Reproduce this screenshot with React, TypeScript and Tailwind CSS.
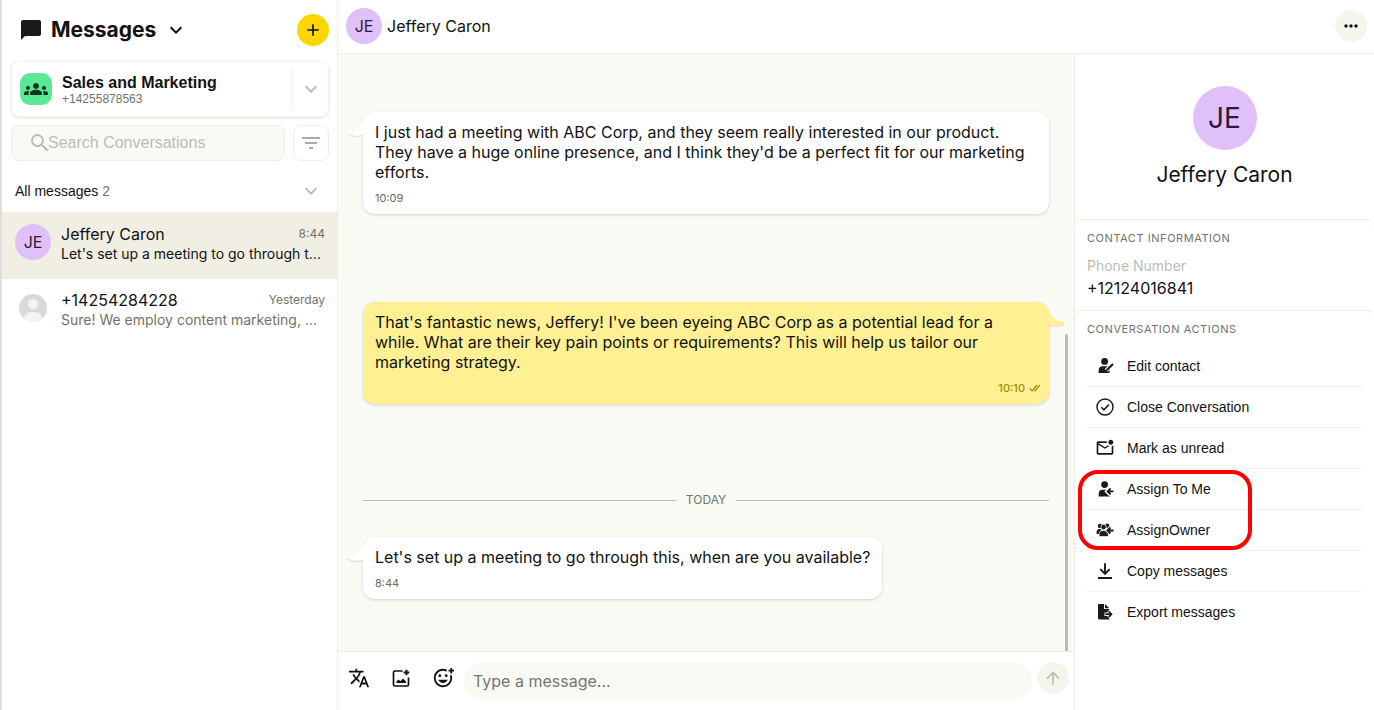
import { useState, type ReactNode } from "react";
import {
  MdAdd,
  MdArrowUpward,
  MdChatBubble,
  MdFilterList,
  MdGroups,
  MdKeyboardArrowDown,
  MdMoreHoriz,
  MdOutlineAddReaction,
  MdOutlineMarkEmailUnread,
  MdSearch,
  MdTranslate,
} from "react-icons/md";

function Avatar({ className }: { className: string }) {
  return (
    <span className={`flex shrink-0 items-center justify-center rounded-full bg-[#e0c0f8] text-[#2a1a35] ${className}`}>
      JE
    </span>
  );
}

function PersonIcon() {
  return (
    <svg viewBox="0 0 28 28" className="size-7 shrink-0">
      <defs>
        <clipPath id="person-clip">
          <circle cx="14" cy="14" r="14" />
        </clipPath>
      </defs>
      <g clipPath="url(#person-clip)">
        <rect width="28" height="28" fill="#d9d9d9" />
        <circle cx="14" cy="10" r="5.2" fill="#f3f3f3" />
        <path d="M5 28v-3.500a6.500 6.500 0 0 1 6.500-6.500h5a6.500 6.500 0 0 1 6.500 6.500V28z" fill="#f3f3f3" />
      </g>
    </svg>
  );
}

function AddImageIcon() {
  return (
    <svg viewBox="0 0 20 20" className="size-5" fill="none" stroke="currentColor" strokeWidth="1.700">
      <path d="M11.500 3H4a1.500 1.500 0 0 0-1.500 1.500v12A1.500 1.500 0 0 0 4 18h12a1.500 1.500 0 0 0 1.500-1.500V9.500" />
      <path d="M15.500 1.700v5.600M12.700 4.500h5.600" strokeWidth="2" />
      <path d="M5.500 15v-1.600l2-2 1.900 1.800 2.600-2.800 3 3V15z" fill="currentColor" stroke="none" />
    </svg>
  );
}

function EditContactIcon() {
  return (
    <svg viewBox="0 0 18 18" className="size-[18px]" fill="currentColor">
      <circle cx="8.600" cy="4.400" r="3.400" />
      <path d="M2.700 16v-2.700C2.700 10.800 4.300 9.300 6.500 9.300H11c1 0 1.800.2 2.500.7V16z" />
      <path d="M17 6.500l-6.800 6.800" fill="none" stroke="#fff" strokeWidth="4" />
      <path d="M17 6.900l-5.900 5.900" fill="none" stroke="currentColor" strokeWidth="2.100" />
      <path d="M10.200 12l1.700 1.700-2.800 1z" />
    </svg>
  );
}

function CheckCircleIcon() {
  return (
    <svg viewBox="0 0 18 18" className="size-[18px]" fill="none" stroke="currentColor" strokeWidth="1.400">
      <circle cx="9" cy="9" r="8" />
      <path d="M5.400 9.300l2.500 2.500 5-5.300" strokeWidth="1.600" />
    </svg>
  );
}

function AssignMeIcon() {
  return (
    <svg viewBox="0 0 18 18" className="size-[18px]" fill="currentColor">
      <circle cx="8.600" cy="4.600" r="3.400" />
      <path d="M2.700 16.500v-2.700c0-2.500 1.600-4 3.800-4H11c1.200 0 2.200.5 2.900 1.300v5.400z" />
      <path d="M17.500 11.400h-6M14.600 8l-3.400 3.400 3.400 3.400" fill="none" stroke="#fff" strokeWidth="4" />
      <path d="M17.400 11.400h-5.400M14.600 8.500l-2.900 2.900 2.900 2.900" fill="none" stroke="currentColor" strokeWidth="1.900" />
    </svg>
  );
}

function AssignOwnerIcon() {
  return (
    <svg viewBox="0 0 18 18" className="size-[18px]" fill="currentColor">
      <circle cx="4" cy="5" r="2.200" />
      <circle cx="11.200" cy="4.800" r="2.200" />
      <path d="M.6 13v-2.200C.6 9 1.800 7.900 3.200 7.900h1.600v5.100z" />
      <circle cx="7.600" cy="6" r="2.700" stroke="#fff" strokeWidth=".7" />
      <path d="M3.100 15.500v-2.300C3.100 11 4.500 9.600 6.300 9.600h2.900c1.700 0 3 1.200 3.200 3v2.900z" stroke="#fff" strokeWidth=".7" />
      <path d="M17.700 9.500h-5M14.200 6.500l-3 3 3 3" fill="none" stroke="#fff" strokeWidth="3.400" />
      <path d="M17.600 9.500h-5.800M14.400 6.500l-3 3 3 3" fill="none" stroke="currentColor" strokeWidth="1.900" />
    </svg>
  );
}

function DownloadIcon() {
  return (
    <svg viewBox="0 0 18 18" className="size-[18px]" fill="none" stroke="currentColor" strokeWidth="1.900">
      <path d="M9 1.200v10.300M4.300 7.200L9 11.900l4.700-4.700M2 16h14" />
    </svg>
  );
}

function ExportIcon() {
  return (
    <svg viewBox="0 0 18 18" className="size-[18px]" fill="currentColor">
      <path d="M2 2.200C2 1.500 2.500 1 3.200 1H8v5h5.300v10.500H3.200C2.500 16.500 2 16 2 15.300z" />
      <path d="M9 1l4.200 4.200H9z" />
      <path d="M8.500 11.200h7M12.400 7.800l3.400 3.400-3.400 3.400" fill="none" stroke="#fff" strokeWidth="3.600" />
      <path d="M9.300 11.200h6M12.600 8.300l2.900 2.900-2.900 2.900" fill="none" stroke="currentColor" strokeWidth="1.700" />
    </svg>
  );
}

function DoubleCheck() {
  return (
    <svg viewBox="0 0 12 8" className="h-2 w-3" fill="none" stroke="currentColor" strokeWidth="1.200">
      <path d="M.7 4.300l2.400 2.500L8 1M5.300 6.500l.5.400L11 1" />
    </svg>
  );
}

function Tail({ side }: { side: "left" | "right" }) {
  return (
    <svg
      viewBox="0 0 20 26"
      className={
        side === "left"
          ? "absolute top-0 -left-4 h-[26px] w-5 text-white"
          : "absolute top-0 -right-4 h-[26px] w-5 -scale-x-100 text-[#fff094]"
      }
      fill="currentColor"
    >
      <path d="M.5 21C3 24.500 9 25 15.700 23.500" fill="none" stroke="#000" strokeOpacity=".09" strokeWidth="1.500" />
      <path d="M20 4l-3 3C14.500 14 9 19.800.3 20.200 2 23 9 24.500 16 22.800l4-.8z" />
    </svg>
  );
}

function Message({
  children,
  time,
  own = false,
  className = "",
}: {
  children: ReactNode;
  time: string;
  own?: boolean;
  className?: string;
}) {
  return (
    <article
      className={`relative rounded-xl px-3 text-base leading-5 shadow-[0_1px_3px_rgba(0,0,0,0.16)] ${
        own ? "bg-[#fff094]" : "bg-white"
      } ${className}`}
    >
      <Tail side={own ? "right" : "left"} />
      <p className="pt-2.5">{children}</p>
      <footer
        className={`flex h-8 items-center gap-1 text-[11px] leading-4 ${
          own ? "-mr-1 justify-end font-medium text-[#a28c00]" : "text-[#6a6a62]"
        }`}
      >
        <time>{time}</time>
        {own && <DoubleCheck />}
      </footer>
    </article>
  );
}

const actions: { label: string; icon: ReactNode }[] = [
  { label: "Edit contact", icon: <EditContactIcon /> },
  { label: "Close Conversation", icon: <CheckCircleIcon /> },
  { label: "Mark as unread", icon: <MdOutlineMarkEmailUnread className="size-5" /> },
  { label: "Assign To Me", icon: <AssignMeIcon /> },
  { label: "AssignOwner", icon: <AssignOwnerIcon /> },
  { label: "Copy messages", icon: <DownloadIcon /> },
  { label: "Export messages", icon: <ExportIcon /> },
];

function Sidebar() {
  return (
    <aside className="flex w-[338px] shrink-0 flex-col border-r border-l-2 border-r-[#efeee0] border-l-[#dedede]">
      <header className="flex h-[61px] items-center pr-2 pb-0.5 pl-[17px]">
        <MdChatBubble className="size-6 shrink-0 text-[#1a1a17]" />
        <h1 className="ml-2 text-[21px] font-bold">Messages</h1>
        <button aria-label="Switch section" className="ml-2">
          <MdKeyboardArrowDown className="size-6" />
        </button>
        <button aria-label="New message" className="ml-auto flex size-8 items-center justify-center rounded-full bg-[#ffd600]">
          <MdAdd className="size-5" />
        </button>
      </header>
      <section className="mr-2 ml-[9px] flex h-14 items-center rounded-lg border border-[#f3f3ea] pl-2 font-[Liberation_Sans,Arial,sans-serif] shadow-[0_1px_3px_rgba(0,0,0,0.12)]">
        <span className="flex size-8 items-center justify-center rounded-[10px] bg-[#5ce995] text-[#12351f]">
          <MdGroups className="size-6" />
        </span>
        <div className="ml-2.5 flex-1">
          <h2 className="text-base leading-5 font-bold">Sales and Marketing</h2>
          <p className="text-xs leading-3 text-[#73736a]">+14255878563</p>
        </div>
        <button aria-label="Switch inbox" className="flex h-10 w-9 items-center justify-center border-l border-[#f1f0e4] text-[#bdbdb3]">
          <MdKeyboardArrowDown className="size-6" />
        </button>
      </section>
      <div className="mt-2 mr-2 ml-[9px] flex h-9 gap-2 font-[Liberation_Sans,Arial,sans-serif]">
        <label className="flex min-w-0 flex-1 items-center rounded-lg border border-[#efeee0] bg-[#f9faf4] pl-4">
          <MdSearch className="size-6 shrink-0 text-[#bcbcb2]" />
          <input
            type="search"
            aria-label="Search Conversations"
            placeholder="Search Conversations"
            className="-ml-1 min-w-0 flex-1 bg-transparent text-base outline-none placeholder:text-[#bdbdb3]"
          />
        </label>
        <button aria-label="Filter" className="flex w-9 items-center justify-center rounded-lg border border-[#efeee0] text-[#acaca4]">
          <MdFilterList className="size-6" />
        </button>
      </div>
      <button className="flex h-[51px] items-center pt-2 pr-3.5 pl-[13px] font-[Liberation_Sans,Arial,sans-serif] text-sm">
        All messages <span className="ml-1 text-[#73736a]">2</span>
        <MdKeyboardArrowDown className="ml-auto size-6 text-[#bdbdb3]" />
      </button>
      <ul>
        <li>
          <a href="#jeffery" className="flex h-[67px] gap-2.5 bg-[#f1efe3] pt-3 pr-3 pl-[13px]">
            <Avatar className="size-9 text-base" />
            <div className="min-w-0 flex-1">
              <div className="flex items-center justify-between">
                <span className="text-base leading-5">Jeffery Caron</span>
                <time className="text-xs text-[#73736a]">8:44</time>
              </div>
              <p className="text-sm leading-5 whitespace-nowrap">Let's set up a meeting to go through t...</p>
            </div>
          </a>
        </li>
        <li>
          <a href="#unknown" className="flex h-[67px] gap-2.5 pt-[11px] pr-3 pl-[13px]">
            <span className="flex w-9 justify-center pt-1">
              <PersonIcon />
            </span>
            <div className="min-w-0 flex-1">
              <div className="flex items-center justify-between">
                <span className="text-base leading-5">+14254284228</span>
                <time className="text-xs text-[#73736a]">Yesterday</time>
              </div>
              <p className="text-sm leading-5 whitespace-nowrap text-[#73736a]">Sure! We employ content marketing, ...</p>
            </div>
          </a>
        </li>
      </ul>
    </aside>
  );
}

function Conversation() {
  const [draft, setDraft] = useState("");
  return (
    <main className="flex min-w-0 flex-1 flex-col bg-[#f9faf4]">
      <div className="relative flex-1 px-[25px] pt-[58px]">
        <Message time="10:09">
          I just had a meeting with ABC Corp, and they seem really interested in our product. They have a huge online
          presence, and I think they'd be a perfect fit for our marketing efforts.
        </Message>
        <Message time="10:10" own className="mt-[88px]">
          That's fantastic news, Jeffery! I've been eyeing ABC Corp as a potential lead for a while. What are their key
          pain points or requirements? This will help us tailor our marketing strategy.
        </Message>
        <div className="mt-[86px] mb-[27px] flex h-5 items-center gap-2.5 text-xs text-[#73736a]">
          <hr className="flex-1 border-[#bdbdb3]" />
          TODAY
          <hr className="flex-1 border-[#bdbdb3]" />
        </div>
        <Message time="8:44" className="w-fit">
          Let's set up a meeting to go through this, when are you available?
        </Message>
        <span className="absolute right-1.5 bottom-0 h-[317px] w-[3px] rounded-t-full bg-[#bdbdb3]" />
      </div>
      <form
        className="flex h-[59px] shrink-0 items-center border-t border-[#efeee0] bg-white pr-[5px] pl-2.5"
        onSubmit={(e) => e.preventDefault()}
      >
        <div className="mb-1.5 flex items-center gap-[21px]">
          <button type="button" aria-label="Translate">
            <MdTranslate className="size-[22px]" />
          </button>
          <button type="button" aria-label="Add image">
            <AddImageIcon />
          </button>
          <button type="button" aria-label="Add emoji">
            <MdOutlineAddReaction className="size-[22px]" />
          </button>
        </div>
        <input
          aria-label="Message"
          placeholder="Type a message..."
          value={draft}
          onChange={(e) => setDraft(e.target.value)}
          className="ml-2.5 h-[38px] min-w-0 flex-1 rounded-full bg-[#f9faf4] px-[9px] text-base outline-none placeholder:text-[#757575]"
        />
        <button aria-label="Send" className="mb-1.5 ml-[5px] flex size-8 items-center justify-center rounded-full bg-[#f5f5ee] text-[#bdbdb3]">
          <MdArrowUpward className="size-5" />
        </button>
      </form>
    </main>
  );
}

function Details() {
  return (
    <aside className="flex w-[300px] shrink-0 flex-col border-l border-[#efeee0]">
      <div className="flex h-[165px] flex-col items-center pt-8">
        <Avatar className="size-16 text-[28px]" />
        <h2 className="mt-[11px] text-[21px] leading-7">Jeffery Caron</h2>
      </div>
      <section className="h-[91px] rounded-t-lg border-t border-[#efeee0] px-3 pt-2.5">
        <h3 className="text-[11px] leading-4 tracking-wider text-[#73736a]">CONTACT INFORMATION</h3>
        <dl className="mt-2.5">
          <dt className="text-sm leading-5 text-[#bdbdb3]">Phone Number</dt>
          <dd className="text-base leading-6">+12124016841</dd>
        </dl>
      </section>
      <section className="rounded-t-lg border-t border-[#efeee0] px-3 pt-2.5">
        <h3 className="text-[11px] leading-4 tracking-wider text-[#73736a]">CONVERSATION ACTIONS</h3>
        <div className="relative mt-[9px]">
          <ul className="divide-y divide-[#f3f2e8]">
            {actions.map(({ label, icon }) => (
              <li key={label}>
                <button className="flex h-10 w-full items-center gap-3 pl-2 font-[Liberation_Sans,Arial,sans-serif] text-sm">
                  <span className="flex w-5 justify-center text-[#1a1a17]">{icon}</span>
                  {label}
                </button>
              </li>
            ))}
          </ul>
          <span className="pointer-events-none absolute top-[124px] -left-[9px] h-20 w-[174px] rounded-[20px] border-4 border-[#fe0000]" />
        </div>
      </section>
    </aside>
  );
}

export default function App() {
  return (
    <div className="flex min-h-screen bg-white font-[Inter,sans-serif] text-[#121212]">
      <Sidebar />
      <div className="flex min-w-0 flex-1 flex-col">
        <header className="flex h-[54px] shrink-0 items-center gap-[5px] border-b border-[#efeee0] pr-[7px] pb-0.5 pl-2">
          <Avatar className="size-9 text-base" />
          <h2 className="text-base">Jeffery Caron</h2>
          <button aria-label="More options" className="ml-auto flex size-8 items-center justify-center rounded-full bg-[#f5f5ee]">
            <MdMoreHoriz className="size-5" />
          </button>
        </header>
        <div className="flex flex-1">
          <Conversation />
          <Details />
        </div>
      </div>
    </div>
  );
}
